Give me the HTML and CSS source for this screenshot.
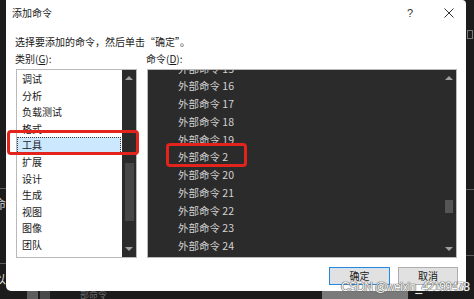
FILE: index.html
```html
<!DOCTYPE html>
<html lang="zh-CN">
<head>
  <meta charset="UTF-8">
  <title>添加命令</title>
  <link rel="stylesheet" href="styles.css">
</head>
<body>
  <div class="screen">
    <div class="edge edge-left">
      <div class="edge-rule rule-a"></div>
      <span class="edge-glyph glyph-a">命</span>
      <div class="edge-rule rule-b"></div>
      <span class="edge-glyph glyph-b">以</span>
    </div>

    <div class="dialog">
      <div class="titlebar">
        <span class="title">添加命令</span>
        <span class="help">?</span>
        <svg class="close" width="10" height="10" viewBox="0 0 10 10">
          <path d="M0.5 0.5 L9.5 9.5 M9.5 0.5 L0.5 9.5" stroke="#333" stroke-width="1" fill="none"/>
        </svg>
      </div>

      <div class="intro">选择要添加的命令，然后单击“确定”。</div>

      <div class="labels">
        <span>类别(<u>G</u>):</span>
        <span>命令(<u>D</u>):</span>
      </div>

      <div class="lists">
        <div class="listbox cat-list">
          <div class="items">
            <div class="item">调试</div>
            <div class="item">分析</div>
            <div class="item">负载测试</div>
            <div class="item">格式</div>
            <div class="item selected">工具</div>
            <div class="item">扩展</div>
            <div class="item">设计</div>
            <div class="item">生成</div>
            <div class="item">视图</div>
            <div class="item">图像</div>
            <div class="item">团队</div>
          </div>
          <div class="vscroll">
            <div class="arrow"><span class="tri up"></span></div>
            <div class="track cat-track"><span class="thumb cat-thumb"></span></div>
            <div class="arrow"><span class="tri down"></span></div>
          </div>
        </div>

        <div class="listbox cmd-list">
          <div class="items">
            <div class="cmd-scroll">
              <div class="cmd">外部命令 15</div>
              <div class="cmd">外部命令 16</div>
              <div class="cmd">外部命令 17</div>
              <div class="cmd">外部命令 18</div>
              <div class="cmd">外部命令 19</div>
              <div class="cmd">外部命令 2</div>
              <div class="cmd">外部命令 20</div>
              <div class="cmd">外部命令 21</div>
              <div class="cmd">外部命令 22</div>
              <div class="cmd">外部命令 23</div>
              <div class="cmd">外部命令 24</div>
              <div class="cmd">外部命令 25</div>
            </div>
          </div>
          <div class="vscroll">
            <div class="arrow"><span class="tri up"></span></div>
            <div class="track cmd-track"><span class="thumb cmd-thumb"></span></div>
            <div class="arrow"><span class="tri down"></span></div>
          </div>
        </div>
      </div>

      <div class="buttons">
        <button class="btn default">确定</button>
        <button class="btn">取消</button>
      </div>
    </div>

    <div class="edge edge-right">
      <span class="edge-mark"></span>
      <div class="edge-rule rule-a"></div>
      <div class="edge-rule rule-b"></div>
    </div>

    <!-- annotation boxes drawn over the screenshot -->
    <div class="mark mark-cat"></div>
    <div class="mark mark-cmd"></div>
    <div class="watermark">CSDN @weixin_42199478</div>
  </div>

  <div class="bottom-strip">
    <span class="strip-block block-a"></span>
    <span class="strip-block block-b"></span>
    <span class="strip-text">部命令</span>
    <span class="strip-block block-c"></span>
  </div>
</body>
</html>
```

FILE: styles.css
```css
body {
  margin: 0;
  background: #1c1c1c;
  font-family: "Noto Sans CJK SC", "Noto Sans", sans-serif;
  font-size: 10px;
  color: #1a1a1a;
  width: 474px;
  height: 299px;
  overflow: hidden;
}

.screen {
  position: relative;
  display: flex;
  height: 291px;
}

/* bits of the app behind the dialog */
.edge {
  display: flex;
  flex-direction: column;
  overflow: hidden;
  background: #1c1c1c;
}

.edge-left {
  width: 6px;
}

.edge-right {
  width: 8px;
}

.edge-rule {
  height: 1px;
  background: #5c5c5c;
  flex-shrink: 0;
}

.rule-a {
  margin-top: 188px;
}

.edge-left .rule-b {
  margin-top: 52px;
}

.edge-right .rule-b {
  margin-top: 65px;
}

.edge-right .rule-a {
  margin-top: 150px;
}

.edge-glyph {
  color: #d8d8d8;
  font-size: 12px;
  line-height: 14px;
  margin-left: -6px;
  flex-shrink: 0;
}

.glyph-a {
  margin-top: 8px;
}

.glyph-b {
  margin-top: 8px;
}

.edge-mark {
  margin-top: 30px;
  margin-left: 1px;
  width: 4px;
  height: 7px;
  border: 1px solid #777;
  flex-shrink: 0;
}

.dialog {
  width: 460px;
  background: #fff;
  border-radius: 0 4px 5px 5px;
  display: flex;
  flex-direction: column;
}

.titlebar {
  height: 26px;
  display: flex;
  align-items: center;
  padding: 0 12px 0 6px;
}

.title {
  flex: 1;
  line-height: 14px;
}

.help {
  font-family: "Liberation Sans", sans-serif;
  font-size: 11px;
  color: #333;
  margin-right: 31px;
}

.intro {
  margin-top: 8px;
  padding-left: 9px;
  line-height: 16px;
}

.labels {
  margin-top: 1px;
  padding-left: 9px;
  display: grid;
  grid-template-columns: 131px 1fr;
  line-height: 16px;
}

.lists {
  margin-top: 2px;
  padding-left: 10px;
  display: flex;
  gap: 10px;
  height: 189px;
}

.listbox {
  box-sizing: border-box;
  height: 189px;
  border: 1px solid #b9b9b9;
  display: flex;
}

.cat-list {
  width: 121px;
}

.cmd-list {
  width: 310px;
  background: #2b2b2b;
}

.items {
  flex: 1;
  overflow: hidden;
}

.cat-list .items {
  background: #fff;
  padding-top: 1px;
  padding-right: 1px;
}

.item {
  height: 16.6px;
  line-height: 16.6px;
  padding-left: 5px;
  box-sizing: border-box;
}

.item.selected {
  background: #cce8ff;
  outline: 1px dotted #3a3a3a;
  outline-offset: -1px;
}

.cmd-scroll {
  margin-top: -10.4px;
  padding-left: 30px;
}

.cmd {
  height: 17.75px;
  line-height: 17.75px;
  color: #d2d2d2;
  font-size: 10.5px;
}

.vscroll {
  width: 14px;
  background: #2b2b2b;
  display: flex;
  flex-direction: column;
}

.arrow {
  height: 16px;
  display: flex;
  align-items: center;
  justify-content: center;
}

.tri {
  width: 0;
  height: 0;
  border-left: 4px solid transparent;
  border-right: 4px solid transparent;
}

.tri.up {
  border-bottom: 4px solid #a0a0a0;
}

.tri.down {
  border-top: 4px solid #a0a0a0;
}

.track {
  flex: 1;
  display: flex;
  justify-content: center;
}

.thumb {
  display: block;
  width: 9px;
  background: #474747;
}

.cat-track {
  padding-top: 77px;
}

.cat-thumb {
  height: 58px;
}

.cmd-track {
  padding-top: 114px;
}

.cmd-thumb {
  width: 8px;
  height: 13px;
  background: #555;
}

.buttons {
  margin-top: 9px;
  display: flex;
  justify-content: flex-end;
  gap: 8px;
  padding-right: 8px;
}

.btn {
  font-family: inherit;
  font-size: 10px;
  color: #1a1a1a;
  width: 60px;
  height: 18px;
  padding: 0;
  background: #e1e1e1;
  border: 1px solid #adadad;
  line-height: 16px;
}

.btn.default {
  width: 61px;
  border-color: #2f86d6;
  box-shadow: inset 0 0 0 1px #cfe3f5;
}

.mark {
  position: absolute;
  border: 3px solid #e3241c;
  border-radius: 4px;
  box-sizing: border-box;
}

.mark-cat {
  left: 7px;
  top: 130px;
  width: 132px;
  height: 25px;
}

.mark-cmd {
  left: 166px;
  top: 143px;
  width: 81px;
  height: 24px;
}

.watermark {
  position: absolute;
  left: 341px;
  top: 280px;
  font-family: "Liberation Sans", sans-serif;
  font-size: 12px;
  letter-spacing: -0.7px;
  color: #fafafa;
  text-shadow: 0 0 1px #555, 0 0 1px #555, 0 0 1px #555;
  white-space: nowrap;
}

.bottom-strip {
  height: 8px;
  display: flex;
  align-items: flex-start;
  background: #1c1c1c;
}

.strip-block {
  height: 8px;
  background: #5e5e5e;
}

.block-a {
  margin-left: 27px;
  width: 11px;
}

.block-b {
  margin-left: 2px;
  width: 10px;
  background: #4a4a4a;
}

.strip-text {
  margin-left: 30px;
  color: #6a6a6a;
  font-size: 9px;
  line-height: 8px;
  overflow: hidden;
}

.block-c {
  margin-left: 215px;
  width: 86px;
  background: #7a7a7a;
}
```
